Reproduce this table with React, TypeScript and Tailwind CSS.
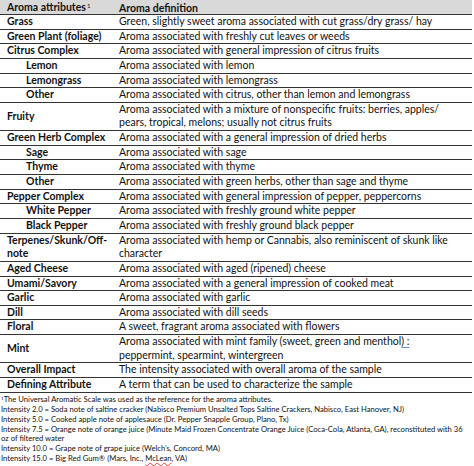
const ROWS: { name: string[]; def: string[]; sub?: boolean }[] = [
  { name: ["Grass"], def: ["Green, slightly sweet aroma associated with cut grass/dry grass/ hay"] },
  { name: ["Green Plant (foliage)"], def: ["Aroma associated with freshly cut leaves or weeds"] },
  { name: ["Citrus Complex"], def: ["Aroma associated with general impression of citrus fruits"] },
  { name: ["Lemon"], sub: true, def: ["Aroma associated with lemon"] },
  { name: ["Lemongrass"], sub: true, def: ["Aroma associated with lemongrass"] },
  { name: ["Other"], sub: true, def: ["Aroma associated with citrus, other than lemon and lemongrass"] },
  {
    name: ["Fruity"],
    def: [
      "Aroma associated with a mixture of nonspecific fruits: berries, apples/",
      "pears, tropical, melons; usually not citrus fruits",
    ],
  },
  { name: ["Green Herb Complex"], def: ["Aroma associated with a general impression of dried herbs"] },
  { name: ["Sage"], sub: true, def: ["Aroma associated with sage"] },
  { name: ["Thyme"], sub: true, def: ["Aroma associated with thyme"] },
  { name: ["Other"], sub: true, def: ["Aroma associated with green herbs, other than sage and thyme"] },
  { name: ["Pepper Complex"], def: ["Aroma associated with general impression of pepper, peppercorns"] },
  { name: ["White Pepper"], sub: true, def: ["Aroma associated with freshly ground white pepper"] },
  { name: ["Black Pepper"], sub: true, def: ["Aroma associated with freshly ground black pepper"] },
  {
    name: ["Terpenes/Skunk/Off-", "note"],
    def: ["Aroma associated with hemp or Cannabis, also reminiscent of skunk like", "character"],
  },
  { name: ["Aged Cheese"], def: ["Aroma associated with aged (ripened) cheese"] },
  { name: ["Umami/Savory"], def: ["Aroma associated with a general impression of cooked meat"] },
  { name: ["Garlic"], def: ["Aroma associated with garlic"] },
  { name: ["Dill"], def: ["Aroma associated with dill seeds"] },
  { name: ["Floral"], def: ["A sweet, fragrant aroma associated with flowers"] },
  { name: ["Mint"], def: ["MINT", "peppermint, spearmint, wintergreen"] },
  { name: ["Overall Impact"], def: ["The intensity associated with overall aroma of the sample"] },
  { name: ["Defining Attribute"], def: ["A term that can be used to characterize the sample"] },
];

function Line({ children }: { children: React.ReactNode }) {
  return <div className="h-[13.65px] whitespace-nowrap leading-[13.65px]">{children}</div>;
}

export default function App() {
  return (
    <div
      className="h-[466px] w-[474px] overflow-hidden bg-white text-[#111]"
      style={{ fontFamily: "Lato, 'Open Sans', sans-serif" }}
    >
      <div className="w-[472px] text-[10.5px]">
        <div className="grid h-[15px] grid-cols-[119px_1fr] items-center border-b border-[#333] bg-[#d9d9d9] font-bold leading-[14px]">
          <div className="pl-[7px]">
            Aroma attributes<span className="relative -top-[3px] ml-[1px] text-[6px] font-normal">1</span>
          </div>
          <div>Aroma definition</div>
        </div>
        {ROWS.map((row, i) => (
          <div key={i} className="grid grid-cols-[119px_1fr] items-center border-b border-[#333]">
            <div className={row.sub ? "pl-[26px] font-bold" : "pl-[7px] font-bold"}>
              {row.name.map((n, j) => (
                <Line key={j}>{n}</Line>
              ))}
            </div>
            <div>
              {row.def.map((line, j) =>
                line === "MINT" ? (
                  <Line key={j}>
                    Aroma associated with mint family (sweet, green and menthol
                    <span className="underline decoration-[#6b8fd6] decoration-1 underline-offset-2">) :</span>
                  </Line>
                ) : (
                  <Line key={j}>{line}</Line>
                )
              )}
            </div>
          </div>
        ))}
      </div>
      <div className="whitespace-nowrap pl-[1px] pt-[2px] text-[7.65px] leading-[9.7px] text-[#111]">
        <div>
          <span className="relative -top-[2px] text-[4.5px]">1</span>The Universal Aromatic Scale was used as the reference for the aroma attributes.
        </div>
        <div>Intensity 2.0 = Soda note of saltine cracker (Nabisco Premium Unsalted Tops Saltine Crackers, Nabisco, East Hanover, NJ)</div>
        <div>Intensity 5.0 = Cooked apple note of applesauce (Dr. Pepper Snapple Group, Plano, Tx)</div>
        <div>
          Intensity 7.5 = Orange note of orange juice (Minute Maid Frozen Concentrate Orange Juice (Coca-Cola, Atlanta, GA), reconstituted with 36
        </div>
        <div>oz of filtered water</div>
        <div>Intensity 10.0 = Grape note of grape juice (Welch’s, Concord, MA)</div>
        <div>
          Intensity 15.0 = Big Red Gum® (Mars, Inc.,{" "}
          <span className="underline decoration-wavy decoration-[#e04040] decoration-1">McLean</span>, VA)
        </div>
      </div>
    </div>
  );
}
